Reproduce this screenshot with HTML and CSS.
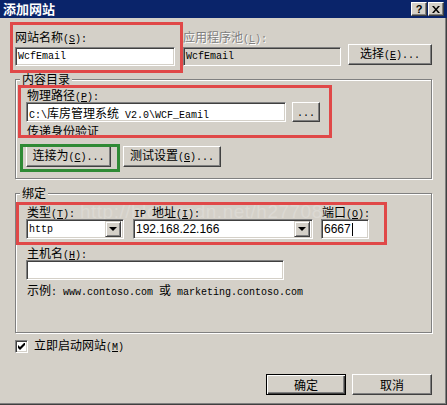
FILE: index.html
```html
<!DOCTYPE html>
<html>
<head>
<title>添加网站</title>
<link rel="stylesheet" href="styles.css">
</head>
<body>

<div class="window">
  <div class="titlebar">
    <span class="title">添加网站</span>
    <div class="tbtns">
      <span class="tbtn">?</span>
      <span class="tbtn">
        <svg width="8" height="7" viewBox="0 0 8 7"><path d="M0 0h2l2 2.5L6 0h2L5 3.5 8 7H6L4 4.5 2 7H0l3-3.5z" fill="#000"/></svg>
      </span>
    </div>
  </div>

  <div class="main">
    <div class="toprow">
      <div class="field site">
        <div class="lbl first">网站名称<span class="m">(<u>S</u>):</span></div>
        <div class="textbox"><span class="m">WcfEmail</span></div>
      </div>
      <div class="field pool">
        <div class="lbl first disabled">应用程序池<span class="m">(<u>L</u>):</span></div>
        <div class="textbox gray"><span class="m">WcfEmail</span></div>
      </div>
      <button class="btn choose">选择<span class="m">(<u>E</u>)...</span></button>
    </div>

    <fieldset class="group content">
      <legend>内容目录</legend>
      <div class="lbl">物理路径<span class="m">(<u>P</u>):</span></div>
      <div class="pathrow">
        <div class="textbox path"><span><span class="m">C:\</span>库房管理系统<span class="m"> V2.0\WCF_Eamil</span></span></div>
        <button class="btn dots"><span class="m">...</span></button>
      </div>
      <div class="lbl pass">传递身份验证</div>
      <div class="btnrow">
        <button class="btn connect">连接为<span class="m">(<u>C</u>)...</span></button>
        <button class="btn test">测试设置<span class="m">(<u>G</u>)...</span></button>
      </div>
    </fieldset>

    <fieldset class="group binding">
      <legend>绑定</legend>
      <div class="watermark">http://blog.csdn.net/h2770880</div>
      <div class="bindrow">
        <div class="field">
          <div class="lbl">类型<span class="m">(<u>T</u>):</span></div>
          <div class="select type"><span class="m">http</span><span class="arrow"></span></div>
        </div>
        <div class="field">
          <div class="lbl"><span class="m">IP </span>地址<span class="m">(<u>I</u>):</span></div>
          <div class="select ip"><span class="ipval">192.168.22.166</span><span class="arrow"></span></div>
        </div>
        <div class="field">
          <div class="lbl">端口<span class="m">(<u>O</u>):</span></div>
          <div class="textbox port"><span class="ipval">6667</span><span class="caret"></span></div>
        </div>
      </div>
      <div class="lbl host">主机名<span class="m">(<u>H</u>):</span></div>
      <div class="textbox hostbox"></div>
      <div class="lbl example">示例<span class="m">: www.contoso.com </span>或<span class="m"> marketing.contoso.com</span></div>
    </fieldset>

    <div class="checkrow">
      <span class="checkbox">
        <svg width="7" height="7" viewBox="0 0 7 7"><path d="M0 2v3l2 2 5-5V-1L2 4z" fill="#000"/></svg>
      </span>
      <span>立即启动网站<span class="m">(<u>M</u>)</span></span>
    </div>

    <div class="actions">
      <button class="btn ok default">确定</button>
      <button class="btn cancel">取消</button>
    </div>
  </div>

  <!-- annotation boxes drawn over the dialog -->
  <div class="mark red box1"></div>
  <div class="mark red box2"></div>
  <div class="mark red box3"></div>
  <div class="mark green box4"></div>
</div>

</body>
</html>
```

FILE: styles.css
```css
body {
  margin: 0;
  font-family: "Noto Sans CJK SC", sans-serif;
  font-size: 12px;
  color: #000;
}
.window {
  position: relative;
  width: 447px;
  height: 405px;
  overflow: hidden;
  background-color: #d4d0c8;
  box-shadow: inset -1px -1px 0 #404040, inset -2px -2px 0 #808080;
}
.m {
  font-family: "Liberation Mono", monospace;
  font-size: 10px;
}
.titlebar {
  display: flex;
  align-items: center;
  height: 18px;
  padding-left: 3px;
  background-color: #0a246a;
  color: #fff;
}
.title {
  font-size: 13px;
  font-weight: bold;
  line-height: 18px;
}
.tbtns {
  display: flex;
  margin-left: auto;
  margin-right: 3px;
  gap: 1px;
}
.tbtn {
  display: flex;
  align-items: center;
  justify-content: center;
  width: 14px;
  height: 12px;
  background-color: #d4d0c8;
  border: 1px solid;
  border-color: #fff #404040 #404040 #fff;
  box-shadow: inset -1px -1px 0 #808080;
  color: #000;
  font-family: "Liberation Sans", sans-serif;
  font-weight: bold;
  font-size: 11px;
  line-height: 12px;
}
.main {
  padding: 0 15px;
}
.lbl {
  line-height: 12px;
  height: 12px;
  white-space: nowrap;
}
.lbl.disabled {
  color: #808080;
  text-shadow: 1px 1px 0 #fff;
}
.textbox, .select {
  display: flex;
  align-items: center;
  box-sizing: border-box;
  height: 20px;
  padding-left: 2px;
  background-color: #fff;
  border: 1px solid;
  border-color: #808080 #fff #fff #808080;
  box-shadow: inset 1px 1px 0 #404040, inset -1px -1px 0 #d4d0c8;
  white-space: pre;
}
.textbox.gray {
  background-color: #d4d0c8;
}
.btn {
  box-sizing: border-box;
  height: 21px;
  padding: 0;
  background-color: #d4d0c8;
  border: 1px solid;
  border-color: #fff #404040 #404040 #fff;
  box-shadow: inset -1px -1px 0 #808080;
  font-family: "Noto Sans CJK SC", sans-serif;
  font-size: 12px;
  line-height: 12px;
  color: #000;
  white-space: nowrap;
}
.btn.default {
  border-color: #000;
  box-shadow: inset 1px 1px 0 #fff, inset -1px -1px 0 #404040, inset -2px -2px 0 #808080;
}

/* top row */
.toprow {
  display: flex;
  align-items: flex-end;
  margin-top: 13px;
}
.toprow .lbl {
  margin-bottom: 4px;
}
.site {
  width: 160px;
}
.pool {
  width: 158px;
  margin-left: 8px;
}
.site .textbox, .pool .textbox {
  height: 19px;
}
.choose {
  width: 84px;
  margin-left: auto;
  margin-bottom: 1px;
}

/* group boxes */
.group {
  margin: 7px 0 0;
  padding: 4px 10px 11px;
  border: 1px solid #808080;
  box-shadow: inset 1px 1px 0 #fff, 1px 1px 0 #fff;
}
.group legend {
  padding: 0 2px;
  margin-left: -6px;
  line-height: 12px;
  background-color: #d4d0c8;
}
.content .lbl {
  padding-left: 1px;
}
.pathrow {
  display: flex;
  gap: 6px;
  margin-top: 1px;
}
.path {
  width: 260px;
}
.dots {
  width: 28px;
  height: 20px;
}
.pass {
  margin-top: 3px;
}
.btnrow {
  display: flex;
  gap: 12px;
  margin-top: 9px;
}
.connect {
  width: 85px;
}
.test {
  width: 98px;
}

.binding {
  position: relative;
  margin-top: 8px;
  padding: 7px 10px 36px;
}
.watermark {
  position: absolute;
  left: 64px;
  top: 4px;
  font-family: "Liberation Sans", sans-serif;
  font-size: 19px;
  line-height: 18px;
  letter-spacing: 0.5px;
  color: #dcd9d3;
  white-space: nowrap;
}
.bindrow {
  position: relative;
  display: flex;
}
.bindrow .lbl {
  padding-left: 1px;
  margin-bottom: 1px;
}
.type {
  width: 98px;
}
.ip {
  width: 180px;
}
.bindrow .field:nth-child(2) {
  margin-left: 9px;
}
.bindrow .field:nth-child(3) {
  margin-left: 8px;
}
.port {
  width: 48px;
}
.select {
  padding-right: 2px;
}
.arrow {
  position: relative;
  margin-left: auto;
  box-sizing: border-box;
  width: 16px;
  height: 16px;
  background-color: #d4d0c8;
  border: 1px solid;
  border-color: #d4d0c8 #404040 #404040 #d4d0c8;
  box-shadow: inset 1px 1px 0 #fff, inset -1px -1px 0 #808080;
}
.arrow::after {
  content: "";
  position: absolute;
  left: 3px;
  top: 5px;
  border-left: 4px solid transparent;
  border-right: 4px solid transparent;
  border-top: 4px solid #000;
}
.ipval {
  font-family: "Liberation Sans", sans-serif;
  font-size: 12px;
}
.caret {
  width: 1px;
  height: 13px;
  margin-left: 1px;
  background-color: #000;
}
.host {
  position: relative;
  margin-top: 8px;
  padding-left: 1px;
}
.hostbox {
  width: 258px;
  margin-top: 1px;
}
.example {
  margin-top: 4px;
  padding-left: 1px;
}

.checkrow {
  display: flex;
  align-items: center;
  gap: 6px;
  margin-top: 5px;
  line-height: 13px;
}
.checkbox {
  display: flex;
  align-items: center;
  justify-content: center;
  box-sizing: border-box;
  width: 13px;
  height: 13px;
  background-color: #fff;
  border: 1px solid;
  border-color: #808080 #fff #fff #808080;
  box-shadow: inset 1px 1px 0 #404040, inset -1px -1px 0 #d4d0c8;
}
.actions {
  display: flex;
  justify-content: flex-end;
  gap: 6px;
  margin-top: 20px;
}
.ok, .cancel {
  width: 80px;
}

/* red / green annotation frames */
.mark {
  position: absolute;
  box-sizing: border-box;
  border: 3px solid;
}
.red {
  border-color: #e04848;
}
.green {
  border-color: #2f8a35;
}
.box1 {
  left: 10px;
  top: 22px;
  width: 173px;
  height: 51px;
}
.box2 {
  left: 18px;
  top: 85px;
  width: 314px;
  height: 53px;
}
.box3 {
  left: 16px;
  top: 202px;
  width: 371px;
  height: 43px;
}
.box4 {
  left: 20px;
  top: 144px;
  width: 100px;
  height: 28px;
}
```
